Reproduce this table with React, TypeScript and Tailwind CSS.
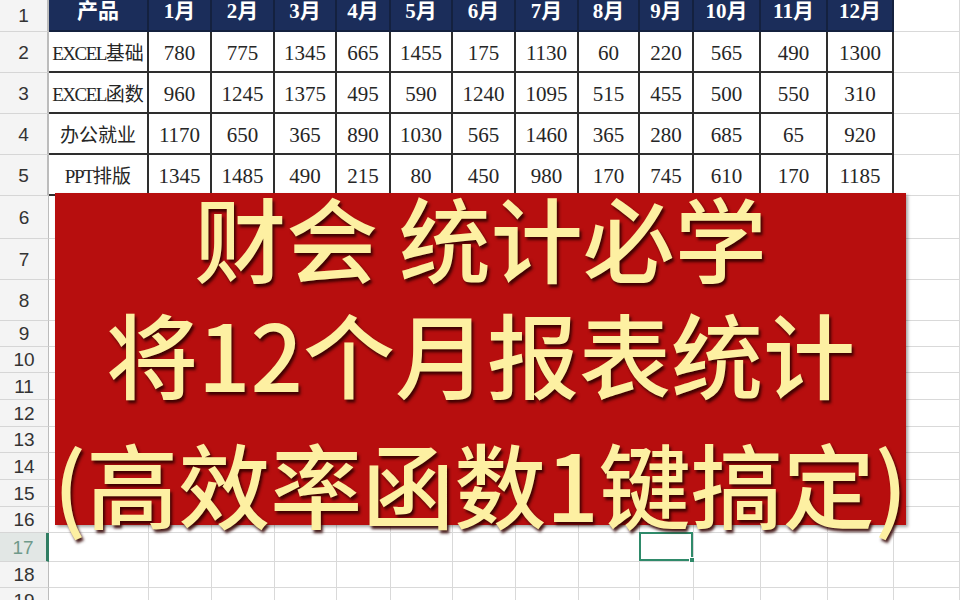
import React from "react";

const months = ["1月", "2月", "3月", "4月", "5月", "6月", "7月", "8月", "9月", "10月", "11月", "12月"];
const data: [string, string, number[]][] = [
  ["EXCEL", "基础", [780, 775, 1345, 665, 1455, 175, 1130, 60, 220, 565, 490, 1300]],
  ["EXCEL", "函数", [960, 1245, 1375, 495, 590, 1240, 1095, 515, 455, 500, 550, 310]],
  ["", "办公就业", [1170, 650, 365, 890, 1030, 565, 1460, 365, 280, 685, 65, 920]],
  ["PPT", "排版", [1345, 1485, 490, 215, 80, 450, 980, 170, 745, 610, 170, 1185]],
];

const ROWS = 19;
const COLS = 15;

const serif = "font-['Liberation_Serif','Noto_Sans_CJK_SC',serif]";

function Cell({ r, c }: { r: number; c: number }) {
  if (c === 0) {
    const sel = r === 16;
    return (
      <div
        className={
          "flex items-center justify-center border-b border-[#d6d6d6] font-['Liberation_Sans','Noto_Sans',sans-serif] text-[19px] leading-none " +
          (sel
            ? "bg-[#e2e7e5] text-[#6f9a8a] border-r-[3px] border-r-[#2f7d62]"
            : "bg-[#f4f4f4] text-[#333] border-r border-r-[#bcbcbc] " + (r < 5 ? "border-r-2 border-r-[#2b2b2b]" : ""))
        }
      >
        {r + 1}
      </div>
    );
  }
  const inTable = r < 5 && c >= 1 && c <= 13;
  if (inTable) {
    if (r === 0) {
      return (
        <div className={"flex items-center justify-center bg-[#1b2d5a] border-r-2 border-b-2 border-[#14213f] pb-[7px] text-white font-bold text-[21px] leading-none " + serif}>
          {c === 1 ? "产品" : months[c - 2]}
        </div>
      );
    }
    const row = data[r - 1];
    return (
      <div className={"flex items-center justify-center bg-white border-r-2 border-b-2 border-[#2e2e2e] pt-[3px] text-[#262626] leading-none " + serif}>
        {c === 1 ? (
          <span className="text-[19px] whitespace-nowrap">
            <span className="tracking-[-1.5px]">{row[0]}</span>
            {row[1]}
          </span>
        ) : (
          <span className="text-[21px]">{row[2][c - 2]}</span>
        )}
      </div>
    );
  }
  const sel = r === 16 && c === 10;
  return (
    <div className="relative bg-white border-r border-b border-[#d9d9d9]">
      {sel && (
        <div className="absolute left-[-1px] top-[-1px] right-0 bottom-0 border-2 border-[#2f8a6a]">
          <div className="absolute right-[-4px] bottom-[-4px] w-[6px] h-[6px] bg-[#2f8a6a] border border-white" />
        </div>
      )}
    </div>
  );
}

export default function App() {
  const cells: React.ReactNode[] = [];
  for (let r = 0; r < ROWS; r++) {
    for (let c = 0; c < COLS; c++) {
      cells.push(<Cell key={r + "-" + c} r={r} c={c} />);
    }
  }
  return (
    <div className="relative w-[960px] h-[600px] overflow-hidden bg-white">
      <div className="grid grid-cols-[49px_100px_63px_63px_62px_54px_62px_63px_63px_61px_54px_67px_67px_66px_1fr] grid-rows-[32px_41px_41px_41px_41px_43px_41px_41px_26px_26px_27px_27px_26px_27px_27px_26px_29px_26px_26px]">
        {cells}
      </div>

      <div className="absolute left-[55px] top-[193px] w-[851px] h-[332px] bg-[#b70e0e] shadow-[2px_2px_3px_rgba(0,0,0,0.35)] flex flex-col items-center font-['Noto_Sans_CJK_SC',sans-serif] font-medium text-[92px] leading-[80px] text-[#fdf0a2] [text-shadow:2px_3px_3px_rgba(50,0,0,0.9)] whitespace-nowrap">
        <div className="mt-[3px]">财会 统计必学</div>
        <div className="mt-[36px]">将12个月报表统计</div>
        <div className="mt-[50px]">(高效率函数1键搞定)</div>
      </div>
    </div>
  );
}
